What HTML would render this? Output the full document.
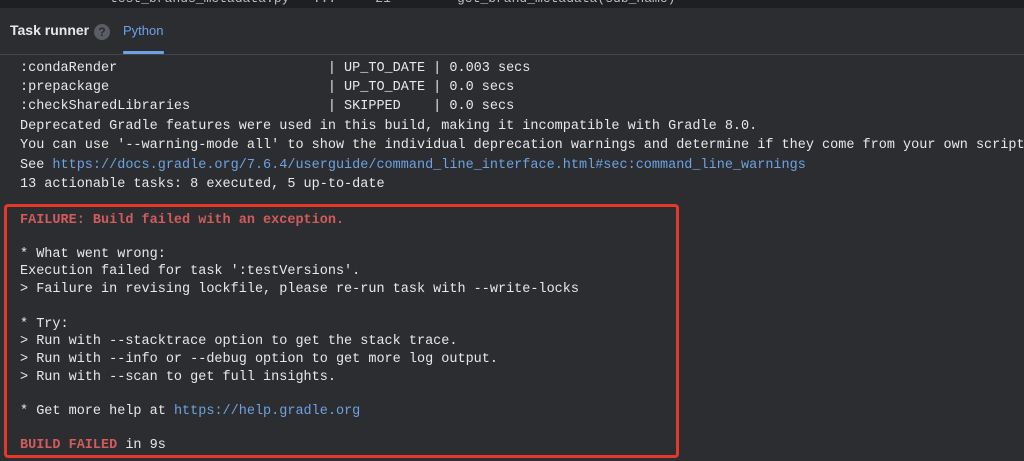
<!DOCTYPE html>
<html><head><style>
body{margin:0;width:1024px;height:461px;overflow:hidden;background:#2b2d30;font-family:"Liberation Mono",monospace;color:#e6e8ec;position:relative}
.top{position:absolute;left:0;top:0;width:1024px;height:8px;background:#1e1f22;overflow:hidden}
.top span{position:absolute;top:-9px;font-size:13px;color:#bcbec4}
.hdr{position:absolute;left:0;top:8px;width:1024px;height:46px;background:#2b2d30;border-bottom:1px solid #44464b;font-family:"Liberation Sans",sans-serif}
.title{position:absolute;left:10px;top:14px;font-size:14px;font-weight:bold;color:#e6e8ec}
.q{position:absolute;left:94px;top:16px;width:16px;height:16px;border-radius:50%;background:#5a5d63;color:#2b2d30;font-size:12px;font-weight:bold;text-align:center;line-height:16px}
.tab{position:absolute;left:123px;top:15px;font-size:13px;color:#6fa1e8}
.ul{position:absolute;left:123px;top:43px;width:41px;height:3px;background:#6fa1e8;border-radius:1px}
.l{position:absolute;left:20px;font-size:13.5px;white-space:pre;line-height:16px}
.r{color:#d25c5c;font-weight:bold}
.a{color:#6ea2e0}
.box{position:absolute;left:4px;top:204px;width:669px;height:248px;border:3px solid #e5382a;border-radius:4px}
</style></head><body>
<div class="top"><span style="left:110px">test_brands_metadata.py &nbsp; ... &nbsp; &nbsp; 21</span><span style="left:457px">get_brand_metadata(sub_name)</span></div>
<div class="hdr"><div class="title">Task runner</div><div class="q">?</div><div class="tab">Python</div><div class="ul"></div></div>
<div class="l" style="top:61px">:condaRender                          | UP_TO_DATE | 0.003 secs</div>
<div class="l" style="top:80px">:prepackage                           | UP_TO_DATE | 0.0 secs</div>
<div class="l" style="top:99px">:checkSharedLibraries                 | SKIPPED    | 0.0 secs</div>
<div class="l" style="top:119px">Deprecated Gradle features were used in this build, making it incompatible with Gradle 8.0.</div>
<div class="l" style="top:138px">You can use '--warning-mode all' to show the individual deprecation warnings and determine if they come from your own scripts</div>
<div class="l" style="top:158px">See <span class="a">https://docs.gradle.org/7.6.4/userguide/command_line_interface.html#sec:command_line_warnings</span></div>
<div class="l" style="top:177px">13 actionable tasks: 8 executed, 5 up-to-date</div>
<div class="box"></div>
<div class="l r" style="top:213px">FAILURE: Build failed with an exception.</div>
<div class="l" style="top:247px">* What went wrong:</div>
<div class="l" style="top:264px">Execution failed for task ':testVersions'.</div>
<div class="l" style="top:282px">&gt; Failure in revising lockfile, please re-run task with --write-locks</div>
<div class="l" style="top:317px">* Try:</div>
<div class="l" style="top:334px">&gt; Run with --stacktrace option to get the stack trace.</div>
<div class="l" style="top:352px">&gt; Run with --info or --debug option to get more log output.</div>
<div class="l" style="top:370px">&gt; Run with --scan to get full insights.</div>
<div class="l" style="top:404px">* Get more help at <span class="a">https://help.gradle.org</span></div>
<div class="l" style="top:438px"><span class="r">BUILD FAILED</span> in 9s</div>
</body></html>
